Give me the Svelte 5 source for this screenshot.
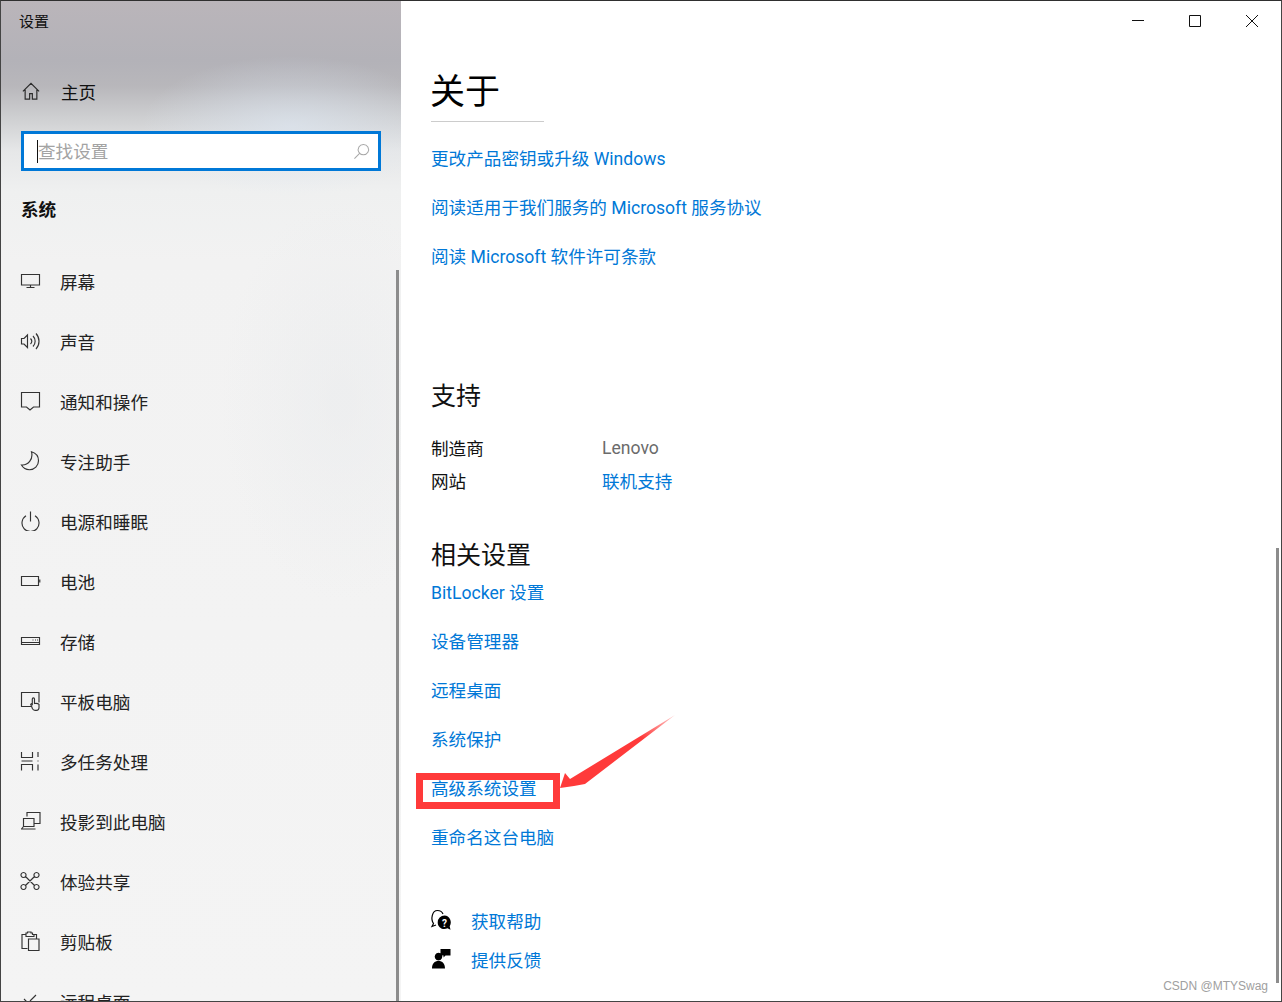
<script lang="ts">
  // Sidebar entries, icons are 20x20 stroke paths
  const navItems = [
    { label: '屏幕', d: 'M1.5 3.5h18v10.5h-18z M10.5 14v2.5 M6.5 16.5h8' },
    { label: '声音', d: 'M1.5 7.5h2.5l3.5-3.5v12.5l-3.5-3.5h-2.5z M10.5 7.5a4 4 0 0 1 0 5.5 M13 5a7.5 7.5 0 0 1 0 10.5 M16 2.5a11.5 11.5 0 0 1 0 15.5' },
    { label: '通知和操作', d: 'M1.5 1.5h18v14.5h-6l-3.5 3-3.5-3h-5z' },
    { label: '专注助手', d: 'M11.5 0.8c4.2 1.2 7 4.8 7 8.9 0 5-4 9-9 9-3.4 0-6.5-1.9-8-4.7 6.5 0.6 12-5.600 10-13.200z' },
    { label: '电源和睡眠', d: 'M10.500 0.500v10 M6 4.800a8.500 8.500 0 1 0 9 0' },
    { label: '电池', d: 'M1.500 5.500h17v9h-17z M19.800 8.500v3' },
    { label: '存储', d: 'M1.500 6.500h18v7h-18z M1.500 11.500h18 M12.500 9h1 M15 9h1 M17 9h1' },
    { label: '平板电脑', d: 'M11 15.500h-9.500v-14h17.500v10 M10.500 12.800l2 5c0.500 1 1.500 1.500 2.500 1.500h1.500c1.500 0 2.500-1.200 2.500-2.500v-3.500c-1-1-3-1-4.500-0.800v-4.500c0-1.500-2.200-1.500-2.200 0v5.500l-1.300-1.200' },
    { label: '多任务处理', d: 'M1.500 1v5.500h11v-5.500 M1.500 19.500v-6h11v6 M1.500 10h11 M18 1v5 M18 13.500v6 M17.500 10h1' },
    { label: '投影到此电脑', d: 'M7 5.500v-4h13v11h-6 M3.500 7.500h10.500v8h-10.500z M1 18h14.500 M3.500 15.500l-2 2.500' },
    { label: '体验共享', d: 'M5.500 5.500l9 9 M14.500 5.500l-9 9 M3.500 1.500a2.500 2.500 0 1 0 0.010 0z M16.500 1.500a2.500 2.500 0 1 0 0.010 0z M3.500 13.500a2.500 2.500 0 1 0 0.010 0z M16.500 13.500a2.500 2.500 0 1 0 0.010 0z' },
    { label: '剪贴板', d: 'M7.500 17.500h-5.500v-14h4v-1.500h1.500v-1h3.500v1h1.500v1.500h4v4 M6 3.500v2h8v-2 M8.500 8h10.500v11.500h-10.500z' },
    { label: '远程桌面', d: 'M4 8l3 3 M10 10l6-6' }
  ];

  const topLinks = ['更改产品密钥或升级 Windows', '阅读适用于我们服务的 Microsoft 服务协议', '阅读 Microsoft 软件许可条款'];
  const relatedLinks = ['BitLocker 设置', '设备管理器', '远程桌面', '系统保护', '高级系统设置', '重命名这台电脑'];
</script>

<div class="window">
  <aside class="sidebar">
    <div class="app-title">设置</div>

    <div class="home-row">
      <svg class="home-icon" viewBox="0 0 20 20" aria-hidden="true">
        <path d="M1 10.500L10 1.500l9 9 M3.500 8.500v10.500h5v-6h3v6h5v-10.500" />
      </svg>
      <span>主页</span>
    </div>

    <div class="search">
      <span class="caret"></span>
      <span class="placeholder">查找设置</span>
      <svg class="search-icon" viewBox="0 0 18 18" aria-hidden="true">
        <path d="M11 1.500a5.500 5.500 0 1 1-0.010 0z M7 11L1.500 16.500" />
      </svg>
    </div>

    <div class="section-title">系统</div>

    <nav class="nav-list">
      {#each navItems as item}
        <div class="nav-item">
          <svg viewBox="0 0 21 20" aria-hidden="true"><path d={item.d} /></svg>
          <span>{item.label}</span>
        </div>
      {/each}
    </nav>

    <div class="side-scroll"></div>
  </aside>

  <main class="content">
    <div class="window-controls">
      <svg viewBox="0 0 14 14" aria-hidden="true"><path d="M1 6.500h12" /></svg>
      <svg viewBox="0 0 14 14" aria-hidden="true"><path d="M1.500 1.500h11v11h-11z" /></svg>
      <svg viewBox="0 0 14 14" aria-hidden="true"><path d="M1 1l12 12 M13 1L1 13" /></svg>
    </div>

    <h1>关于</h1>
    <div class="title-rule"></div>

    <div class="links">
      {#each topLinks as link}
        <a href="#top">{link}</a>
      {/each}
    </div>

    <h2 class="support-title">支持</h2>
    <div class="info-grid">
      <span>制造商</span>
      <span class="muted">Lenovo</span>
      <span>网站</span>
      <a href="#top">联机支持</a>
    </div>

    <h2 class="related-title">相关设置</h2>
    <div class="links">
      {#each relatedLinks as link}
        <a href="#top" class:marked={link === '高级系统设置'}>
          {link}
          {#if link === '高级系统设置'}
            <span class="callout-box"></span>
            <svg class="callout-arrow" viewBox="0 0 130 90" aria-hidden="true">
              <defs>
                <linearGradient id="arrow-fade" x1="0" y1="1" x2="1" y2="0">
                  <stop offset="0.7" stop-color="#ff3a3a" />
                  <stop offset="1" stop-color="#ff3a3a" stop-opacity="0.25" />
                </linearGradient>
              </defs>
              <polygon points="10,82 15,67 20,73 125,9 35,78 24,80" fill="url(#arrow-fade)" />
            </svg>
          {/if}
        </a>
      {/each}
    </div>

    <div class="help">
      <div class="help-row">
        <svg viewBox="0 0 20 20" aria-hidden="true">
          <path class="outline" d="M5 14l-4 1.500 1.500-3C-0.500 8 1 -0.500 6.500-0.500 9-0.500 11 0.500 12 3" />
          <path d="M13.500 4.500a6.800 6.800 0 0 0-6.800 6.900c0 5 5.300 8.300 9.800 5.900l3 1.500-0.800-3.500c3-4.500-0.200-10.800-5.200-10.800z" />
          <text x="13.500" y="15.500" class="mark">?</text>
        </svg>
        <a href="#top">获取帮助</a>
      </div>
      <div class="help-row">
        <svg viewBox="0 0 20 20" aria-hidden="true">
          <path d="M7.500 2.800a3.800 3.800 0 1 1-0.010 0z M1 18.500c0-5 2.500-7.500 6.500-7.500s6.500 2.500 6.500 7.500z M9.500-1h10v6.500h-5l-2 2v-2h-3z" />
        </svg>
        <a href="#top">提供反馈</a>
      </div>
    </div>

    <div class="content-scroll"></div>
    <div class="watermark">CSDN @MTYSwag</div>
  </main>
</div>

<style>
  :global(body) {
    margin: 0;
    background: #fff;
  }

  .window {
    position: relative;
    display: flex;
    box-sizing: border-box;
    width: 1282px;
    height: 1002px;
    overflow: hidden;
    border: 1px solid #444;
    border-top-color: #2f2f2f;
    font-family: Roboto, "Noto Sans CJK SC", sans-serif;
    font-size: 17.6px;
    color: #111;
  }

  /* acrylic sidebar */
  .sidebar {
    position: relative;
    flex: none;
    width: 400px;
    overflow: hidden;
    background:
      radial-gradient(ellipse 150px 70px at 290px 125px, rgba(222, 232, 244, 0.6), transparent),
      radial-gradient(ellipse 120px 200px at 340px 400px, rgba(232, 234, 236, 0.5), transparent),
      linear-gradient(180deg, #bab5ba 0, #b3b2b8 60px, #b8b7bb 85px, #cfd0d2 118px, #e6e7e8 150px, #eff0f0 190px, #f2f2f2 260px, #f4f4f4 100%);
  }

  .app-title {
    height: 40px;
    padding-left: 18px;
    font-size: 15px;
    line-height: 42px;
    color: #111;
  }

  .home-row {
    display: flex;
    align-items: center;
    gap: 21px;
    height: 48px;
    margin-top: 26px;
    padding-left: 21px;
  }

  .home-icon {
    width: 18px;
    height: 18px;
    fill: none;
    stroke: #2b2b2b;
    stroke-width: 1.3;
  }

  .search {
    position: relative;
    display: flex;
    align-items: center;
    box-sizing: border-box;
    width: 360px;
    height: 40px;
    margin: 16px 0 0 20px;
    padding-left: 13px;
    border: 3px solid #0078d7;
    background: #fff;
  }

  .caret {
    flex: none;
    width: 1px;
    height: 23px;
    background: #111;
  }

  .placeholder {
    margin-top: -2px;
    color: #a3a3a3;
  }

  .search-icon {
    position: absolute;
    right: 8px;
    top: 9px;
    width: 17px;
    height: 17px;
    fill: none;
    stroke: #a8a8a8;
    stroke-width: 1.1;
  }

  .section-title {
    height: 30px;
    margin: 24px 0 0 20px;
    font-weight: 700;
    line-height: 30px;
  }

  .nav-list {
    margin-top: 26px;
  }

  .nav-item {
    display: flex;
    align-items: center;
    gap: 19px;
    height: 60px;
    padding-left: 19px;
    color: #222;
  }

  .nav-item svg {
    flex: none;
    width: 21px;
    height: 20px;
    fill: none;
    stroke: #333;
    stroke-width: 1.15;
  }

  .side-scroll {
    position: absolute;
    top: 269px;
    right: 2px;
    bottom: 0;
    width: 3px;
    background: #8c8c8c;
  }

  .content {
    position: relative;
    flex: 1;
    padding-left: 30px;
    background: #fff;
  }

  .window-controls {
    display: flex;
    justify-content: flex-end;
    align-items: center;
    gap: 43px;
    height: 40px;
    padding-right: 22px;
  }

  .window-controls svg {
    width: 14px;
    height: 14px;
    fill: none;
    stroke: #111;
    stroke-width: 1;
  }

  h1 {
    height: 50px;
    margin: 25px 0 0 -1px;
    font-size: 35px;
    font-weight: 400;
    line-height: 54px;
    color: #000;
  }

  .title-rule {
    width: 113px;
    height: 1px;
    margin-top: 5px;
    background: #ccc;
  }

  h2 {
    height: 26px;
    margin: 0;
    font-size: 25px;
    font-weight: 400;
    line-height: 30px;
    color: #111;
  }

  .support-title {
    margin-top: 100px;
  }

  .related-title {
    margin-top: 44px;
  }

  a {
    color: #0078d7;
    text-decoration: none;
  }

  .links {
    display: flex;
    flex-direction: column;
    align-items: flex-start;
    margin-top: 2px;
  }

  .title-rule + .links {
    margin-top: 13px;
  }

  .links a {
    position: relative;
    height: 49px;
    line-height: 49px;
  }

  .info-grid {
    display: grid;
    grid-template-columns: 171px auto;
    grid-auto-rows: 33px;
    align-items: center;
    margin-top: 23px;
  }

  .muted {
    color: #6b6b6b;
  }

  /* red annotation over the screenshot */
  .callout-box {
    position: absolute;
    left: -15px;
    top: 8px;
    box-sizing: border-box;
    width: 144px;
    height: 36px;
    border: 7px solid #ff3a3a;
  }

  .callout-arrow {
    position: absolute;
    left: 119px;
    top: -59px;
    width: 130px;
    height: 90px;
  }

  .help {
    margin-top: 38px;
  }

  .help-row {
    display: flex;
    align-items: center;
    gap: 20px;
    height: 39px;
  }

  .help-row svg {
    flex: none;
    width: 20px;
    height: 20px;
    overflow: visible;
    fill: #000;
  }

  .help-row .outline {
    fill: none;
    stroke: #000;
    stroke-width: 1.2;
  }

  .help-row .mark {
    fill: #fff;
    font-size: 10px;
    font-weight: 700;
    text-anchor: middle;
  }

  .content-scroll {
    position: absolute;
    top: 547px;
    right: 2px;
    width: 3px;
    height: 435px;
    background: #8c8c8c;
  }

  .watermark {
    position: absolute;
    right: 13px;
    bottom: 8px;
    font-family: "Liberation Sans", sans-serif;
    font-size: 12px;
    color: #a0a0a0;
  }
</style>
